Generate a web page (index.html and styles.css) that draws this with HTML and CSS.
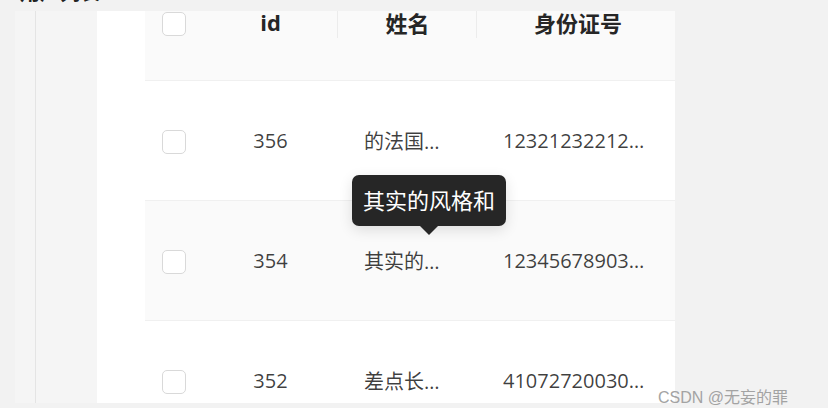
FILE: index.html
```html
<!DOCTYPE html>
<html lang="zh-CN">
<head>
  <meta charset="UTF-8">
  <meta name="viewport" content="width=device-width, initial-scale=1.0">
  <title>用户列表</title>
  <link rel="stylesheet" href="styles.css">
</head>
<body>
  <!-- 页面标题（已滚动到上方） -->
  <div class="page-title"><span>用户列表</span></div>

  <div class="layout">
    <aside class="side"><div class="side-line"></div></aside>

    <main class="panel">
      <div class="table-scroll">
        <table class="user-table">
          <colgroup>
            <col class="w-check">
            <col class="w-id">
            <col class="w-name">
            <col class="w-card">
          </colgroup>
          <thead>
            <tr>
              <th class="cell-check"><span class="checkbox"></span></th>
              <th class="with-sep">id</th>
              <th class="with-sep">姓名</th>
              <th>身份证号</th>
            </tr>
          </thead>
          <tbody>
            <tr>
              <td class="cell-check"><span class="checkbox"></span></td>
              <td>356</td>
              <td class="ellipsis">的法国发的说法</td>
              <td class="ellipsis">123212322121234567</td>
            </tr>
            <tr class="hover">
              <td class="cell-check"><span class="checkbox"></span></td>
              <td>354</td>
              <td class="ellipsis">其实的风格和</td>
              <td class="ellipsis">123456789032165498</td>
            </tr>
            <tr>
              <td class="cell-check"><span class="checkbox"></span></td>
              <td>352</td>
              <td class="ellipsis">差点长大了</td>
              <td class="ellipsis">410727200301010011</td>
            </tr>
          </tbody>
        </table>
      </div>

      <!-- 鼠标悬停时的提示 -->
      <div class="tooltip">其实的风格和</div>
    </main>
  </div>

  <div class="watermark">CSDN @无妄的罪</div>
</body>
</html>
```

FILE: styles.css
```css
body {
  margin: 0;
  width: 828px;
  height: 408px;
  overflow: hidden;
  background: #f2f2f2;
  font-family: "Open Sans", "Noto Sans CJK SC", sans-serif;
  color: rgba(0, 0, 0, 0.76);
}
.page-title {
  height: 11px;
  overflow: hidden;
  padding-left: 20px;
  font-size: 20px;
  font-weight: 700;
  color: #222;
}
.page-title span {
  display: block;
  line-height: 24px;
  margin-top: -19px;
}
.layout {
  display: flex;
  height: 392px;
  margin-left: 15px;
}
.side {
  width: 82px;
  padding-left: 20px;
  box-sizing: border-box;
  background: #f5f5f5;
}
.side-line {
  width: 1px;
  height: 100%;
  background: #e4e4e4;
}
.panel {
  position: relative;
  width: 578px;
  background: white;
  overflow: hidden;
}
.table-scroll {
  padding-left: 48px;
  margin-top: -50px;
}
.user-table {
  border-collapse: separate;
  border-spacing: 0;
  table-layout: fixed;
  width: 534px;
  font-size: 20px;
}
.w-check { width: 58px; }
.w-id { width: 135px; }
.w-name { width: 139px; }
.w-card { width: 202px; }
.user-table th,
.user-table td {
  box-sizing: border-box;
  height: 120px;
  padding: 0 26px;
  text-align: center;
  vertical-align: middle;
  border-bottom: 1px solid #f0f0f0;
}
.user-table th {
  position: relative;
  padding-top: 2px;
  background: #fafafa;
  font-size: 22px;
  font-weight: 700;
  color: #262626;
}
.user-table th.with-sep::after {
  content: "";
  position: absolute;
  right: 0;
  top: 43px;
  width: 1px;
  height: 34px;
  background: #ececec;
}
.user-table .cell-check {
  padding: 0;
}
.user-table tr.hover td {
  background: #fafafa;
}
.ellipsis {
  white-space: nowrap;
  overflow: hidden;
  text-overflow: ellipsis;
}
.checkbox {
  display: inline-block;
  width: 24px;
  height: 24px;
  box-sizing: border-box;
  border: 1px solid #d9d9d9;
  border-radius: 5px;
  background: white;
  vertical-align: middle;
}
.tooltip {
  position: absolute;
  left: 255px;
  top: 164px;
  height: 51px;
  padding: 0 11px;
  line-height: 51px;
  background: #262626;
  color: white;
  font-size: 22px;
  border-radius: 7px;
  box-shadow: 0 4px 14px rgba(0, 0, 0, 0.12);
  white-space: nowrap;
}
.tooltip::after {
  content: "";
  position: absolute;
  left: 50%;
  top: 100%;
  margin-left: -9px;
  border-style: solid;
  border-width: 9px 9px 0;
  border-color: #262626 transparent transparent;
}
.watermark {
  position: absolute;
  left: 658px;
  top: 384px;
  font-family: "Liberation Sans", "Noto Sans CJK SC", sans-serif;
  font-size: 16px;
  color: #a3a3a3;
}
```
